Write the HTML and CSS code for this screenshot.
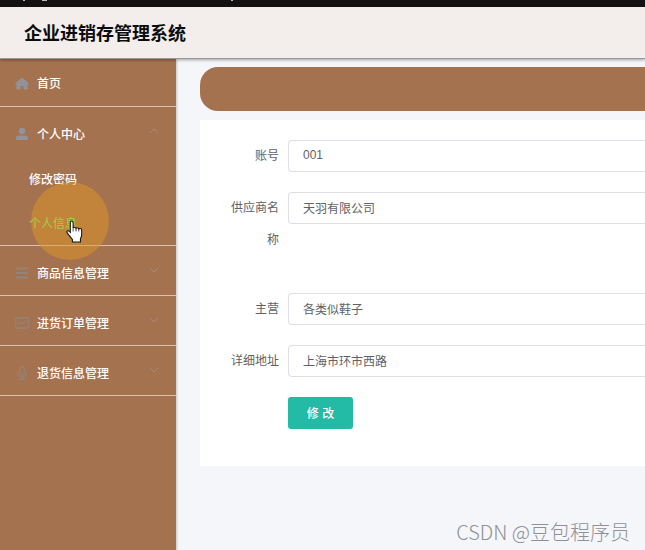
FILE: index.html
```html
<!DOCTYPE html>
<html lang="zh-CN">
<head>
<meta charset="utf-8">
<meta name="viewport" content="width=device-width, initial-scale=1">
<title>企业进销存管理系统</title>
<link rel="stylesheet" href="styles.css">
</head>
<body>
<div class="strip">
  <svg class="strip-marks" width="240" height="2" viewBox="0 0 240 2" aria-hidden="true"><path d="M23 0h2v1h-2zM42 0h5v1h-5zM231 0h2v1h-2z" fill="#bbb"/></svg>
</div>
<header class="header"><h1 class="title">企业进销存管理系统</h1></header>
<div class="layout">
  <nav class="sidebar">
    <ul class="menu">
      <li class="group">
        <a class="item item-home" href="#">
          <svg class="icon" viewBox="0 0 14 14"><path d="M7 1.500L.5 7v1.500H1.500V13.500H5.500V10h3v3.500H12.500V8.500h1V7z" fill="currentColor"/></svg>
          <span>首页</span>
        </a>
      </li>
      <li class="group">
        <a class="item" href="#">
          <svg class="icon" viewBox="0 0 14 14"><circle cx="7" cy="4" r="3.200" fill="currentColor"/><path d="M1 13v-2q0-2.500 3-2.500h6q3 0 3 2.500v2z" fill="currentColor"/></svg>
          <span>个人中心</span>
          <svg class="arrow" viewBox="0 0 10 10"><path d="M1 7l4-4 4 4"/></svg>
        </a>
        <div class="submenu">
          <a class="sub" href="#">修改密码</a>
          <a class="sub sub-active" href="#">个人信息</a>
        </div>
      </li>
      <li class="group">
        <a class="item" href="#">
          <svg class="icon icon-dim" viewBox="0 0 14 14"><path d="M1 2.500h12M1 7h12M1 11.500h12" fill="none" stroke="currentColor" stroke-width="1.800"/></svg>
          <span>商品信息管理</span>
          <svg class="arrow" viewBox="0 0 10 10"><path d="M1 3l4 4 4-4"/></svg>
        </a>
      </li>
      <li class="group">
        <a class="item" href="#">
          <svg class="icon icon-dim" viewBox="0 0 14 14"><rect x=".7" y="2" width="12.600" height="10" rx="1" fill="none" stroke="currentColor" stroke-width="1.300"/><path d="M3.500 5L7 8l3.500-3" fill="none" stroke="currentColor" stroke-width="1.300"/></svg>
          <span>进货订单管理</span>
          <svg class="arrow" viewBox="0 0 10 10"><path d="M1 3l4 4 4-4"/></svg>
        </a>
      </li>
      <li class="group">
        <a class="item" href="#">
          <svg class="icon icon-dim" viewBox="0 0 14 14"><rect x="4.700" y=".7" width="4.600" height="8.300" rx="2.300" fill="none" stroke="currentColor" stroke-width="1.200"/><path d="M2.500 6v1a4.500 4 0 0 0 9 0V6M7 11v2.500M4.500 13.400h5" fill="none" stroke="currentColor" stroke-width="1.200"/></svg>
          <span>退货信息管理</span>
          <svg class="arrow" viewBox="0 0 10 10"><path d="M1 3l4 4 4-4"/></svg>
        </a>
      </li>
    </ul>
  </nav>
  <main class="main">
    <div class="banner"></div>
    <form class="card">
      <div class="row"><label class="label" for="account">账号</label><input class="input" id="account" type="text" value="001"></div>
      <div class="row row-tall"><label class="label" for="supplier">供应商名称</label><input class="input" id="supplier" type="text" value="天羽有限公司"></div>
      <div class="row"><label class="label" for="business">主营</label><input class="input" id="business" type="text" value="各类似鞋子"></div>
      <div class="row"><label class="label" for="address">详细地址</label><input class="input" id="address" type="text" value="上海市环市西路"></div>
      <div class="row row-action"><button class="button" type="button">修 改</button></div>
    </form>
  </main>
</div>
<div class="halo"></div>
<svg class="pointer" width="18" height="23" viewBox="0 0 17 22" aria-hidden="true"><path d="M4 2.500Q4 1 5.300 1T6.700 2.500V8q.3-1 1.400-1T9.500 8.300q.3-.8 1.300-.8t1.300 1.200q.4-.6 1.300-.6 1.500 0 1.500 1.700V14q0 2-1.200 3.700V21H6v-2.500L1.500 13Q.4 11.500 1 10.700q1-1 2.200.3l.8.900z" fill="#fff" stroke="#111" stroke-width="1"/><path d="M6.700 8v3M9.500 8.500V11M12.100 9v2" stroke="#333" stroke-width=".8"/></svg>
<div class="watermark">CSDN @豆包程序员</div>
</body>
</html>
```

FILE: styles.css
```css
* {
  box-sizing: border-box;
}

body {
  margin: 0;
  min-height: 100vh;
  display: flex;
  flex-direction: column;
  position: relative;
  background: #f5f6fa;
  color: #606266;
  font-family: "Liberation Sans", "Noto Sans CJK SC", sans-serif;
  font-size: 12px;
}

.strip {
  height: 7px;
  background: #141213;
}

.strip-marks {
  display: block;
}

.header {
  position: relative;
  height: 52px;
  padding-left: 24px;
  display: flex;
  align-items: center;
  background: #f3eeec;
  border-bottom: 1px solid #999;
  box-shadow: 0 1px 3px rgba(0, 0, 0, 0.35);
}

.title {
  margin: 0;
  padding-top: 2px;
  color: #0c0c0c;
  font-size: 18px;
  line-height: 24px;
  font-weight: 700;
}

.layout {
  flex: 1;
  display: flex;
}

.sidebar {
  flex: 0 0 176px;
  background: #a4724f;
  box-shadow: 1px 0 2px rgba(0, 0, 0, 0.2);
}

.menu {
  margin: 0;
  padding: 0;
  list-style: none;
}

.group {
  border-bottom: 1px solid #d9c2b2;
}

.item {
  display: flex;
  align-items: center;
  gap: 8px;
  height: 49px;
  padding: 4px 17px 0 15px;
  color: #fff;
  font-weight: 500;
  text-decoration: none;
}

.item-home {
  height: 47px;
  padding-top: 0;
}

.icon {
  width: 14px;
  height: 14px;
  color: #909399;
}

.icon-dim {
  color: #948379;
}

.arrow {
  width: 10px;
  height: 10px;
  margin-left: auto;
  margin-bottom: 5px;
  fill: none;
  stroke: #a98a7a;
}

.submenu {
  padding-top: 1px;
}

.sub {
  display: block;
  padding-top: 2px;
  padding-left: 29px;
  color: #fff;
  font-weight: 500;
  line-height: 42px;
  text-decoration: none;
}

.sub-active {
  position: relative;
  z-index: 1;
  color: #a5ce47;
  font-weight: 400;
}

.main {
  flex: 1;
  min-width: 0;
  padding: 8px 0 0 24px;
}

.banner {
  height: 44px;
  border-radius: 18px 0 0 18px;
  background: #a4724f;
}

.card {
  margin-top: 9px;
  padding: 20px 0 37px 24px;
  display: flex;
  flex-direction: column;
  gap: 20px;
  background: #fff;
}

.row {
  display: flex;
  align-items: flex-start;
  gap: 9px;
}

.row-tall {
  padding-bottom: 19px;
}

.row-action {
  padding-left: 64px;
}

.label {
  flex: 0 0 55px;
  text-align: right;
  line-height: 32px;
}

.row-tall .label {
  margin-bottom: -2px;
}

.input {
  flex: 1;
  min-width: 0;
  height: 32px;
  padding: 0 14px 2px;
  border: 1px solid #dcdfe6;
  border-right: 0;
  border-radius: 4px 0 0 4px;
  background: #fff;
  color: #606266;
  font: inherit;
}

.button {
  width: 65px;
  height: 32px;
  padding: 0 0 2px;
  border: 0;
  border-radius: 3px;
  background: #23bba5;
  color: #fff;
  font: inherit;
  font-weight: 500;
}

.halo {
  position: absolute;
  left: 31px;
  top: 182px;
  width: 78px;
  height: 78px;
  border-radius: 50%;
  background: rgba(222, 149, 38, 0.5);
  pointer-events: none;
}

.pointer {
  position: absolute;
  z-index: 2;
  left: 66px;
  top: 220px;
}

.watermark {
  position: absolute;
  right: 15px;
  bottom: 4px;
  color: #8f9194;
  font-family: "Noto Sans CJK SC", sans-serif;
  font-size: 20px;
  font-weight: 300;
  line-height: 28px;
}
```
